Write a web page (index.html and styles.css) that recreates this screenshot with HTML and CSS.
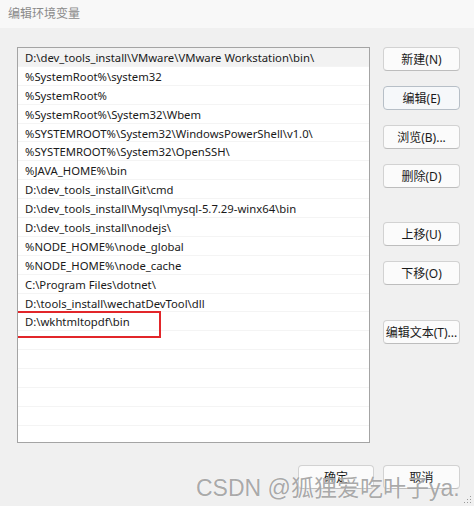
FILE: index.html
```html
<!DOCTYPE html>
<html lang="zh-CN">
<head>
  <meta charset="UTF-8">
  <meta name="viewport" content="width=device-width, initial-scale=1.0">
  <title>编辑环境变量</title>
  <link rel="stylesheet" href="styles.css">
</head>
<body>
  <div class="dialog">
    <div class="title-bar">编辑环境变量</div>
    <div class="dialog-body">
      <ul class="path-list">
        <li class="path-item selected">D:\dev_tools_install\VMware\VMware Workstation\bin\</li>
        <li class="path-item">%SystemRoot%\system32</li>
        <li class="path-item">%SystemRoot%</li>
        <li class="path-item">%SystemRoot%\System32\Wbem</li>
        <li class="path-item">%SYSTEMROOT%\System32\WindowsPowerShell\v1.0\</li>
        <li class="path-item">%SYSTEMROOT%\System32\OpenSSH\</li>
        <li class="path-item">%JAVA_HOME%\bin</li>
        <li class="path-item">D:\dev_tools_install\Git\cmd</li>
        <li class="path-item">D:\dev_tools_install\Mysql\mysql-5.7.29-winx64\bin</li>
        <li class="path-item">D:\dev_tools_install\nodejs\</li>
        <li class="path-item">%NODE_HOME%\node_global</li>
        <li class="path-item">%NODE_HOME%\node_cache</li>
        <li class="path-item">C:\Program Files\dotnet\</li>
        <li class="path-item">D:\tools_install\wechatDevTool\dll</li>
        <li class="path-item marked">D:\wkhtmltopdf\bin</li>
        <li class="path-item"></li>
        <li class="path-item"></li>
        <li class="path-item"></li>
        <li class="path-item"></li>
        <li class="path-item"></li>
        <li class="path-item"></li>
      </ul>
      <div class="side-buttons">
        <button class="btn">新建(N)</button>
        <button class="btn btn-focus">编辑(E)</button>
        <button class="btn">浏览(B)...</button>
        <button class="btn">删除(D)</button>
        <button class="btn group-gap">上移(U)</button>
        <button class="btn">下移(O)</button>
        <button class="btn text-gap">编辑文本(T)...</button>
      </div>
    </div>
    <div class="dialog-footer">
      <button class="btn btn-wide">确定</button>
      <button class="btn">取消</button>
    </div>
    <div class="watermark">CSDN @狐狸爱吃叶子ya.</div>
    <svg class="grip" width="8" height="8" viewBox="0 0 8 8">
      <rect x="6" y="0" width="1" height="1" fill="#999"/>
      <rect x="3" y="3" width="1" height="1" fill="#999"/>
      <rect x="6" y="3" width="1" height="1" fill="#999"/>
      <rect x="0" y="6" width="1" height="1" fill="#999"/>
      <rect x="3" y="6" width="1" height="1" fill="#999"/>
      <rect x="6" y="6" width="1" height="1" fill="#999"/>
    </svg>
  </div>
</body>
</html>
```

FILE: styles.css
```css
* {
  box-sizing: border-box;
}

body {
  margin: 0;
  padding: 0;
  font-family: "Noto Sans", "Noto Sans CJK SC", sans-serif;
  font-size: 12px;
  color: #1a1a1a;
  background-color: #f0f0f0;
}

.dialog {
  position: relative;
  width: 474px;
  height: 506px;
  overflow: hidden;
  background-color: #f0f0f0;
}

.title-bar {
  height: 28px;
  padding: 4px 0 0 8px;
  background-color: #f8f8f8;
  color: #8a8a8a;
  font-family: "Noto Sans CJK SC", sans-serif;
  font-size: 12px;
}

.dialog-body {
  display: flex;
  align-items: flex-start;
  padding: 19px 0 0 17px;
}

.path-list {
  list-style: none;
  margin: 0;
  padding: 0;
  width: 353px;
  height: 396px;
  overflow: hidden;
  background-color: #fff;
  border: 1px solid #a4a4a4;
}

.path-item {
  position: relative;
  height: 18.9px;
  line-height: 19px;
  padding-left: 7px;
  font-size: 11.3px;
  border-bottom: 1px solid #f4f4f4;
  white-space: nowrap;
}

.path-item.selected {
  background-color: #f2f2f2;
}

/* red frame drawn around the newly added entry */
.path-item.marked::after {
  content: "";
  position: absolute;
  left: -2px;
  top: -1px;
  width: 141px;
  height: 23px;
  border: 2px solid #e2262a;
}

.side-buttons {
  display: flex;
  flex-direction: column;
  gap: 15px;
  margin-left: 13px;
}

.btn {
  width: 77px;
  height: 24px;
  padding: 0;
  font-family: "Noto Sans", "Noto Sans CJK SC", sans-serif;
  font-size: 12px;
  color: #1a1a1a;
  background-color: #fbfbfb;
  border: 1px solid #d2d2d2;
  border-bottom-color: #bdbdbd;
  border-radius: 4px;
}

.btn-focus {
  border-color: #b7bfc7;
  background-color: #f6f8fa;
}

.side-buttons .group-gap {
  margin-top: 19px;
}

.side-buttons .text-gap {
  margin-top: 20px;
}

.dialog-footer {
  display: flex;
  justify-content: flex-end;
  gap: 9px;
  padding: 22px 14px 0 0;
}

.btn-wide {
  width: 76px;
}

.watermark {
  position: absolute;
  left: 196px;
  top: 469px;
  font-family: "Liberation Sans", "Noto Sans CJK SC", sans-serif;
  font-size: 23px;
  color: rgba(120, 120, 120, 0.65);
  text-shadow: 0 0 1px #fff;
  white-space: nowrap;
}

.grip {
  position: absolute;
  right: 2px;
  bottom: 2px;
}
```
